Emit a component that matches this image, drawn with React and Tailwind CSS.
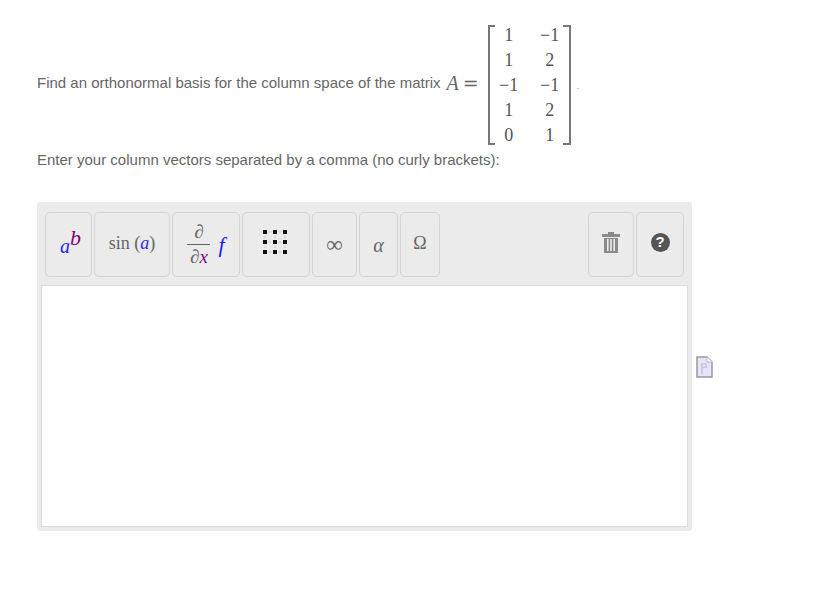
const serif = "font-['Liberation_Serif',serif]";

const matrix = [
  ['1', '−1'],
  ['1', '2'],
  ['−1', '−1'],
  ['1', '2'],
  ['0', '1'],
];

function Key({ width, children }) {
  return (
    <button className={`${width} h-[65px] shrink-0 flex items-center justify-center rounded-[5px] border border-[#d4d4d4] bg-[#ebebeb] text-[#666]`}>
      {children}
    </button>
  );
}

function MatrixGlyph() {
  const dots = [];
  for (let y = 0; y < 3; y++) {
    for (let x = 0; x < 3; x++) {
      dots.push(<rect key={`b${x}${y}`} x={x * 10} y={y * 10} width="4" height="4" fill="#111" />);
      if (x < 2) dots.push(<rect key={`h${x}${y}`} x={x * 10 + 6.5} y={y * 10 + 1.5} width="1" height="1" fill="#999" />);
      if (y < 2) dots.push(<rect key={`v${x}${y}`} x={x * 10 + 1.5} y={y * 10 + 6.5} width="1" height="1" fill="#999" />);
    }
  }
  return <svg width="24" height="24" viewBox="0 0 24 24">{dots}</svg>;
}

function TrashIcon() {
  return (
    <svg width="18" height="21" viewBox="0 0 18 21" fill="#8a8a8a">
      <rect x="6" y="0" width="6" height="2" />
      <rect x="0" y="2" width="18" height="3" />
      <path d="M2 6h14v15H2z" />
      <rect x="5" y="7" width="1.6" height="12" fill="#ebebeb" />
      <rect x="8.2" y="7" width="1.6" height="12" fill="#ebebeb" />
      <rect x="11.4" y="7" width="1.6" height="12" fill="#ebebeb" />
    </svg>
  );
}

function DocIcon() {
  return (
    <svg width="17" height="22" viewBox="0 0 17 22">
      <path d="M1 1h10l5 5v15H1z" fill="#e4e4fa" stroke="#999" strokeWidth="1.5" />
      <path d="M11 1v5h5" fill="#fff" stroke="#bbb" />
      <path d="M5 7h6v5H7v6H5zM7 8.500v2h2.500v-2z" fill="#cacade" />
    </svg>
  );
}

export default function App() {
  return (
    <div className="w-[837px] h-[597px] bg-white pt-[25px] pl-[37px] font-['Liberation_Sans',sans-serif] text-[15px] text-[#666] overflow-hidden">
      <div className="flex items-center h-[120px]">
        <span className="flex items-center pb-[4px]">
          <span className="leading-[20px] whitespace-nowrap">Find an orthonormal basis for the column space of the matrix</span>
          <span className={`${serif} ml-[6px] text-[20px] leading-[20px] italic`}>A</span>
          <span className="ml-[4px] font-['DejaVu_Serif',serif] text-[19px] leading-[20px]">=</span>
        </span>
        <div className={`${serif} ml-[9px] flex w-[83px] h-[120px] shrink-0 text-[#555] text-[18px]`}>
          <div className="w-[7px] border-l-2 border-y-2 border-[#777]" />
          <div className="w-[68px] flex flex-col justify-center">
            {matrix.map((row, i) => (
              <div key={i} className="flex h-[25px] shrink-0 items-center">
                <span className="w-[28px] text-center">{row[0]}</span>
                <span className="w-[26px] ml-[14px] text-center whitespace-nowrap">{row[1]}</span>
              </div>
            ))}
          </div>
          <div className="w-[8px] border-r-2 border-y-2 border-[#777]" />
        </div>
        <span className="ml-[6px] mt-[4px] text-[8px]">.</span>
      </div>
      <p className="mt-[5px] leading-[20px]">Enter your column vectors separated by a comma (no curly brackets):</p>

      <div className="flex items-start mt-[32px]">
        <div className="w-[655px] h-[329px] rounded-[3px] bg-[#ebebeb] px-[4px] pt-[10px]">
          <div className="flex gap-[2px] pl-[4px] pr-[4px] h-[65px]">
            <Key width="w-[47px]">
              <span className={`${serif} italic text-[22px] leading-none mt-[3px] ml-[4px]`}>
                <span className="text-[#2a2ae8] text-[20px]">a</span>
                <span className="text-[#800080] relative -top-[8px]">b</span>
              </span>
            </Key>
            <Key width="w-[76px]">
              <span className={`${serif} text-[18px] whitespace-nowrap -mt-[3px]`}>
                sin (<span className="italic text-[#2a2ae8]">a</span>)
              </span>
            </Key>
            <Key width="w-[68px]">
              <span className={`${serif} flex items-center gap-[8px]`}>
                <span className="flex flex-col items-center text-[19px] leading-[24px]">
                  <span className="italic">∂</span>
                  <span className="w-[23px] h-px bg-[#666]" />
                  <span className="italic">∂<span className="text-[#800080]">x</span></span>
                </span>
                <span className="italic text-[22px] text-[#1a1aff]">f</span>
              </span>
            </Key>
            <Key width="w-[68px]"><span className="-mt-[5px] -ml-[2px]"><MatrixGlyph /></span></Key>
            <Key width="w-[45px]"><span className={`${serif} text-[23px] mt-[1px]`}>∞</span></Key>
            <Key width="w-[39px]"><span className={`${serif} italic text-[20px] mt-[1px]`}>α</span></Key>
            <Key width="w-[40px]"><span className={`${serif} text-[18px] -mt-[2px]`}>Ω</span></Key>
            <div className="flex-1" />
            <Key width="w-[46px]"><span className="-mt-[4px]"><TrashIcon /></span></Key>
            <Key width="w-[48px]">
              <span className="flex w-[19px] h-[19px] -mt-[4px] items-center justify-center rounded-full bg-[#555] text-white text-[15px] font-bold">?</span>
            </Key>
          </div>
          <div className="mt-[8px] h-[242px] border border-[#dcdcdc] bg-white" />
        </div>
        <div className="ml-[4px] mt-[154px]"><DocIcon /></div>
      </div>
    </div>
  );
}
